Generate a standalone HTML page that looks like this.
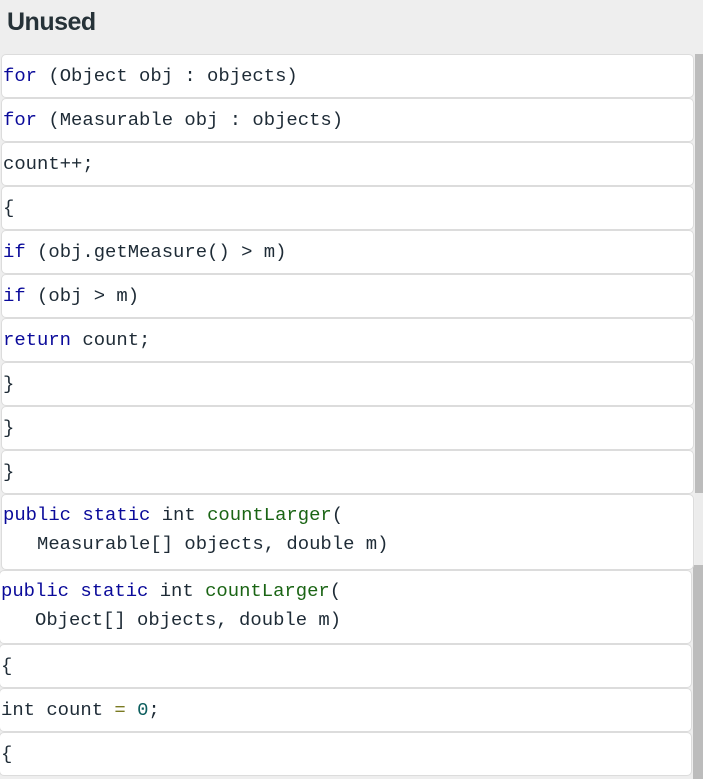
<!DOCTYPE html>
<html><head><style>
body{margin:0;width:703px;height:779px;overflow:hidden;background:#eee;font-family:"Liberation Sans",sans-serif;position:relative}
h1{margin:0;position:absolute;left:7px;top:8px;font-size:25px;font-weight:bold;color:#263238;letter-spacing:-0.5px}
.list{position:absolute;left:1px;width:693px}
.it{box-sizing:border-box;background:#fff;border:1px solid #dcdcdc;border-radius:5px;height:44px;margin:0;padding:0 0 0 1px;font-family:"Liberation Mono",monospace;font-size:18.9px;line-height:42px;color:#1e2b36;white-space:pre;overflow:hidden}
.two{line-height:29px;padding-top:6px}
.k{color:#0a0a9a}.g{color:#1a6414}.n{color:#0d5e5e}.o{color:#7a7a22}
.sb{position:absolute;background:#bcbcbc}
</style></head><body>
<h1>Unused</h1>
<div class="sb" style="left:695px;top:54px;width:8px;height:439px"></div>
<div class="sb" style="left:695px;top:493px;width:8px;height:73px;background:#ececec"></div>
<div class="sb" style="left:693px;top:565px;width:10px;height:214px"></div>
<div class="list" style="top:54px">
<div class="it"><span class="k">for</span> (Object obj : objects)</div>
<div class="it"><span class="k">for</span> (Measurable obj : objects)</div>
<div class="it">count++;</div>
<div class="it">{</div>
<div class="it"><span class="k">if</span> (obj.getMeasure() &gt; m)</div>
<div class="it"><span class="k">if</span> (obj &gt; m)</div>
<div class="it"><span class="k">return</span> count;</div>
<div class="it">}</div>
<div class="it">}</div>
<div class="it">}</div>
<div class="it two" style="height:76px"><span class="k">public static</span> int <span class="g">countLarger</span>(
   Measurable[] objects, double m)</div>
</div>
<div class="list" style="top:570px;left:-1px;width:693px">
<div class="it two" style="height:74px"><span class="k">public static</span> int <span class="g">countLarger</span>(
   Object[] objects, double m)</div>
<div class="it">{</div>
<div class="it">int count <span class="o">=</span> <span class="n">0</span>;</div>
<div class="it">{</div>
</div>
</body></html>
